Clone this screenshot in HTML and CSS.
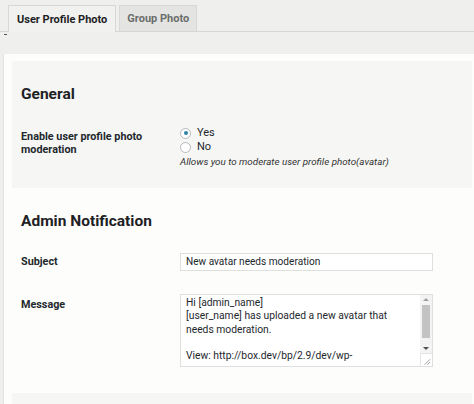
FILE: index.html
```html
<!DOCTYPE html>
<html>
<head>
<meta charset="utf-8">
<link rel="stylesheet" href="styles.css">
</head>
<body>
<div class="page">
  <div class="tabs">
    <div class="tab active">User Profile Photo</div>
    <div class="tab">Group Photo</div>
  </div>
  <div class="dash"></div>
  <div class="content">
    <div class="section shaded">
      <h2 class="title">General</h2>
      <div class="row">
        <div class="label">Enable user profile photo moderation</div>
        <div class="field">
          <label class="radio"><span class="dot checked"></span>Yes</label>
          <label class="radio"><span class="dot"></span>No</label>
          <div class="desc">Allows you to moderate user profile photo(avatar)</div>
        </div>
      </div>
    </div>
    <div class="section">
      <h2 class="title">Admin Notification</h2>
      <div class="row subject-row">
        <div class="label">Subject</div>
        <div class="field"><div class="input">New avatar needs moderation</div></div>
      </div>
      <div class="row message-row">
        <div class="label">Message</div>
        <div class="field">
          <div class="textarea">
            <div class="ta-text">Hi [admin_name]<br>[user_name] has uploaded a new avatar that<br>needs moderation.<br><br>View: http://box.dev/bp/2.9/dev/wp-</div>
            <div class="scrollbar">
              <div class="arrow up"></div>
              <div class="track"><div class="thumb"></div></div>
              <div class="arrow down"></div>
              <div class="grip"><svg width="12" height="10" viewBox="0 0 12 10"><path d="M4 9 L10 3 M7 9 L10 6" stroke="#9a9a9a" stroke-width="1" fill="none"/></svg></div>
            </div>
          </div>
        </div>
      </div>
    </div>
    <div class="section shaded last"></div>
  </div>
</div>
</body>
</html>
```
FILE: styles.css
```css
html, body {
  margin: 0;
  padding: 0;
  background: #eff0ee;
  overflow: hidden;
}
body {
  font-family: Roboto, "Noto Sans", sans-serif;
  color: #23282d;
  font-size: 10.8px;
  width: 474px;
  height: 404px;
}
.tabs {
  display: flex;
  gap: 3px;
  padding: 5px 0 0 8px;
  height: 26px;
  border-bottom: 1px solid #d6d7d5;
}
.tab {
  box-sizing: border-box;
  height: 26px;
  padding: 0 7px;
  display: flex;
  align-items: center;
  font-weight: bold;
  font-size: 11px;
  color: #6b6d6b;
  background: #e4e5e3;
  border: 1px solid #d8d9d7;
  border-bottom: none;
}
.tab.active {
  padding: 0 8px;
  color: #1e2124;
  background: #f1f2f0;
  height: 27px;
  margin-bottom: -1px;
}
.dash {
  width: 3px;
  height: 1px;
  background: #555;
  margin: 2px 0 0 4px;
}
.content {
  margin: 19px 0 0 3px;
  background: #fdfefc;
  border-left: 1px solid #e3e4e2;
  padding: 7px 2px 0 8px;
}
.section {
  padding: 22px 9px 0 9px;
}
.section.shaded {
  background: #f6f7f5;
  height: 105px;
}
.section.last {
  margin-top: 26px;
  height: 30px;
}
.title {
  margin: 0;
  font-size: 15.5px;
  font-weight: bold;
  line-height: 22px;
  color: #1e2124;
}
.row {
  display: flex;
}
.label {
  width: 149px;
  font-weight: bold;
  line-height: 13.3px;
  padding-right: 10px;
}
.field {
  flex: 1;
}
.shaded .row {
  margin-top: 19px;
}
.shaded .label {
  padding-top: 6px;
}
.shaded .field {
  padding-top: 2px;
}
.radio {
  display: flex;
  align-items: center;
  line-height: 14px;
  gap: 6px;
  font-size: 11px;
}
.dot {
  box-sizing: border-box;
  width: 11px;
  height: 11px;
  border-radius: 50%;
  border: 1px solid #b4b9be;
  background: #fff;
  display: inline-flex;
  align-items: center;
  justify-content: center;
}
.dot.checked::after {
  content: "";
  width: 4px;
  height: 4px;
  border-radius: 50%;
  background: #2a83a6;
}
.desc {
  font-style: italic;
  font-size: 9.8px;
  line-height: 14px;
  margin-top: 1px;
  color: #333;
}
.subject-row {
  margin-top: 21px;
  align-items: center;
}
.input {
  box-sizing: border-box;
  width: 253px;
  height: 18px;
  border: 1px solid #dfe0de;
  background: #fff;
  padding: 0 5px;
  line-height: 16px;
  font-size: 10.1px;
}
.message-row {
  margin-top: 23px;
}
.message-row .label {
  padding-top: 4px;
}
.textarea {
  box-sizing: border-box;
  width: 253px;
  height: 73px;
  border: 1px solid #dfe0de;
  background: #fff;
  display: flex;
}
.ta-text {
  flex: 1;
  padding: 1px 5px 0 5px;
  line-height: 13.3px;
  font-size: 10.3px;
  overflow: hidden;
  white-space: nowrap;
}
.scrollbar {
  width: 12px;
  display: flex;
  flex-direction: column;
  background: #f3f3f3;
}
.arrow {
  height: 9px;
  display: flex;
  align-items: center;
  justify-content: center;
}
.arrow::after {
  content: "";
  border-left: 3px solid transparent;
  border-right: 3px solid transparent;
}
.arrow.up::after { border-bottom: 3px solid #9f9f9f; }
.arrow.down::after { border-top: 3px solid #505050; }
.track {
  flex: 1;
  padding: 1px 2px;
}
.thumb {
  height: 33px;
  background: #c3c3c3;
}
.grip {
  height: 12px;
  background: #fff;
  border-top: 1px solid #e5e5e5;
  border-left: 1px solid #e5e5e5;
  display: flex;
  align-items: flex-end;
}
```
